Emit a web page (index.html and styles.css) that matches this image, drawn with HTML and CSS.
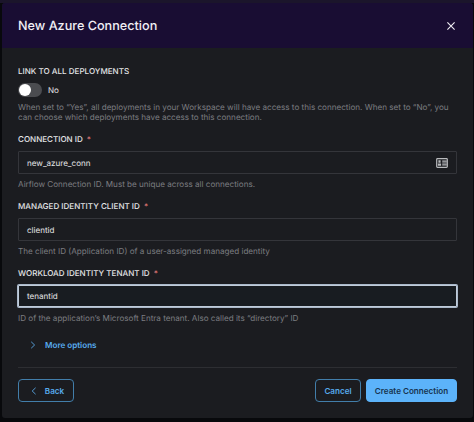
FILE: index.html
```html
<!DOCTYPE html>
<html lang="en">
<head>
<meta charset="utf-8">
<title>New Azure Connection</title>
<link rel="stylesheet" href="styles.css">
</head>
<body>
<main class="modal">
  <header class="modal-header">
    <h1>New Azure Connection</h1>
    <svg class="close" viewBox="0 0 10 10"><path d="M1.4 1.4l7.2 7.2M8.6 1.4L1.4 8.6"/></svg>
  </header>
  <div class="modal-body">
    <section class="link-all">
      <div class="label">LINK TO ALL DEPLOYMENTS</div>
      <div class="toggle-row"><span class="toggle"><span class="knob"></span></span><span>No</span></div>
      <p class="help intro">When set to “Yes”, all deployments in your Workspace will have access to this connection. When set to “No”, you<br>can choose which deployments have access to this connection.</p>
    </section>
    <section class="field">
      <div class="label">CONNECTION ID<span class="required">*</span></div>
      <div class="input"><span>new_azure_conn</span>
        <svg class="card-icon" viewBox="0 0 12 10"><rect x=".7" y=".7" width="10.6" height="8.6" rx=".8"/><path d="M6.2 3.1h4.6M6.2 5h4.6M6.2 6.9h4.6"/><path class="solid" d="M1.9 7.8V5.4h3.2v2.4zM2.4 2.2h2.2v2.5H2.4z"/></svg>
      </div>
      <p class="help">Airflow Connection ID. Must be unique across all connections.</p>
    </section>
    <section class="field">
      <div class="label">MANAGED IDENTITY CLIENT ID<span class="required">*</span></div>
      <div class="input"><span>clientid</span></div>
      <p class="help">The client ID (Application ID) of a user-assigned managed identity</p>
    </section>
    <section class="field">
      <div class="label">WORKLOAD IDENTITY TENANT ID<span class="required">*</span></div>
      <div class="input focused"><span>tenantid</span></div>
      <p class="help">ID of the application’s Microsoft Entra tenant. Also called its “directory” ID</p>
    </section>
    <div class="more"><svg class="chevron" viewBox="0 0 6 8"><path d="M1.2 .8l3.4 3.2-3.4 3.2"/></svg><span>More options</span></div>
    <footer class="actions">
      <button class="btn back"><svg class="chevron" viewBox="0 0 6 8"><path d="M4.6 .8L1.2 4l3.4 3.2"/></svg><span>Back</span></button>
      <button class="btn cancel">Cancel</button>
      <button class="btn primary">Create Connection</button>
    </footer>
  </div>
</main>
</body>
</html>
```
FILE: styles.css
```css
* { box-sizing: border-box; }
body {
  margin: 0;
  height: 422px;
  padding: 3px 1px 4px 2px;
  overflow: hidden;
  background: linear-gradient(#1b152b 0 3px, #08090c 3px);
  font-family: Inter, "Liberation Sans", sans-serif;
  font-size: 8.05px;
  color: #e4e5e7;
  text-rendering: geometricPrecision;
}
.modal {
  height: 415px;
  background: #1b1c20;
  border-radius: 3px;
  overflow: hidden;
}
.modal-header {
  height: 45px;
  padding: 2px 17px 0 16px;
  display: flex;
  align-items: center;
  justify-content: space-between;
  background: #190d33;
}
h1 { margin: 0; font-size: 12.65px; font-weight: 500; line-height: 16px; color: #f1eff5; }
.close { width: 10px; height: 10px; margin-top: -2px; fill: none; stroke: #f1eff5; stroke-width: 1.1; }
.modal-body { padding: 17px 16px 0 16px; }
.link-all { height: 68px; }
.label { height: 12px; line-height: 12px; font-weight: 500; white-space: nowrap; }
.required { margin-left: 4px; color: #d4716f; }
.toggle-row { display: flex; align-items: center; gap: 6px; height: 14px; margin-top: 6px; }
.toggle { width: 24px; height: 14px; padding: 1px; border-radius: 7px; background: #4b4c50; }
.knob { display: block; width: 12px; height: 12px; border-radius: 50%; background: #fff; }
.help { margin: 4px 0 0; font-size: 8.1px; line-height: 12px; color: #7c7d81; white-space: nowrap; }
.help.intro { margin-top: 5px; line-height: 10px; }
.field { height: 67px; }
.input {
  height: 23px;
  margin-top: 6px;
  padding: 0 8px;
  display: flex;
  align-items: center;
  justify-content: space-between;
  border: 1px solid #34353a;
  border-radius: 1px;
}
.input.focused {
  height: 22px;
  border-color: #c0cbd9;
  box-shadow: 0 0 0 1px #a9b8ca;
  background: #181c21;
}
.input.focused + .help { margin-top: 5px; }
.card-icon { width: 12px; height: 10px; fill: none; stroke: #b9babd; stroke-width: 1.2; }
.card-icon .solid { fill: #b9babd; stroke: none; }
.chevron { width: 6px; height: 8px; fill: none; stroke: #5aa7e4; stroke-width: .9; }
.more {
  height: 34px;
  margin: -1px 0 0;
  padding: 0 0 10px 12px;
  display: flex;
  align-items: center;
  gap: 9px;
  font-size: 8.1px;
  font-weight: 600;
  color: #57abed;
}
.actions { display: flex; gap: 5px; padding-top: 11px; border-top: 1px solid #2d2e32; }
.btn {
  height: 23px;
  padding: 0;
  display: flex;
  align-items: center;
  justify-content: center;
  border: 1px solid #427eaa;
  border-radius: 4px;
  background: transparent;
  color: #57abed;
  font: 600 8.1px Inter, "Liberation Sans", sans-serif;
  white-space: nowrap;
}
.back { width: 56px; gap: 8px; padding-left: 3px; margin-right: auto; }
.cancel { width: 46px; }
.primary { width: 91px; border-color: #5cb3fa; background: #5cb3fa; color: #17334f; }
```
